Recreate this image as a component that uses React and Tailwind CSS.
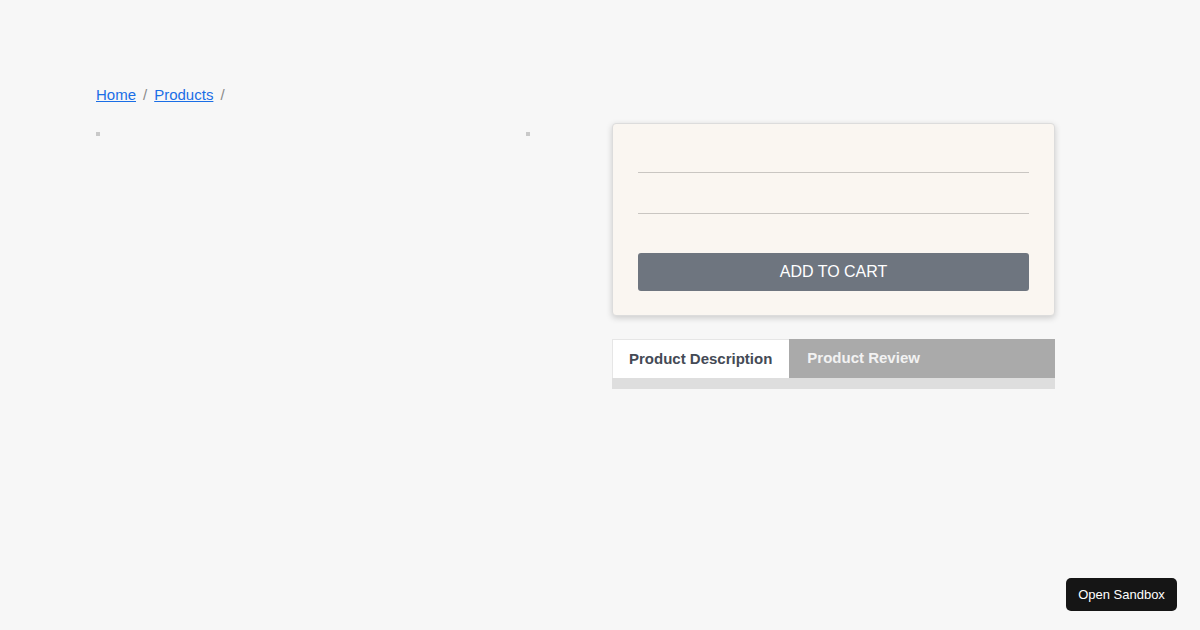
import React from "react";

export default function App() {
  return (
    <div className="min-h-[630px] w-full bg-[#f7f7f7] font-['Liberation_Sans',Arial,sans-serif] text-[#333]">
      <div className="pl-[96px] pt-[84px]">
        <nav className="flex h-[22px] items-center text-[15px] leading-[22px]">
          <a href="#" className="text-[#1a6ee6] underline">Home</a>
          <span className="mx-[7px] text-[#8a8a8a]">/</span>
          <a href="#" className="text-[#1a6ee6] underline">Products</a>
          <span className="mx-[7px] text-[#8a8a8a]">/</span>
        </nav>
        <div className="mt-[17px] flex">
          <div className="flex w-[434px] items-start justify-between pt-[9px]">
            <span className="block h-[4px] w-[4px] bg-[#c9c9c9]" />
            <span className="block h-[4px] w-[4px] bg-[#c9c9c9]" />
          </div>
          <div className="ml-[82px] w-[443px]">
            <div className="rounded-[4px] border border-[#dcdcdc] bg-[#faf6f1] px-[25px] pb-[24px] pt-[25px] shadow-[0_2px_6px_rgba(0,0,0,0.18)]">
              <div className="h-[24px] border-b border-[#c9c6c2]" />
              <div className="h-[41px] border-b border-[#c9c6c2]" />
              <button className="mt-[39px] flex h-[38px] w-full items-center justify-center rounded-[3px] bg-[#6e757f] text-[16px] text-white">
                ADD TO CART
              </button>
            </div>
            <div className="mt-[23px]">
              <div className="flex h-[39px] bg-[#aaaaaa]">
                <div className="flex h-full items-center border-l border-t border-[#e6e6e6] bg-white pl-[16px] pr-[17px] text-[15px] font-bold text-[#444a55]">
                  Product Description
                </div>
                <div className="flex h-full items-center px-[18px] text-[15px] font-bold text-[#f2f2f2]">
                  Product Review
                </div>
              </div>
              <div className="h-[11px] bg-[#dedede]" />
            </div>
          </div>
        </div>
      </div>
      <button className="fixed bottom-[19px] right-[23px] h-[33px] w-[111px] rounded-[5px] bg-[#151515] text-[13px] text-white">
        Open Sandbox
      </button>
    </div>
  );
}
